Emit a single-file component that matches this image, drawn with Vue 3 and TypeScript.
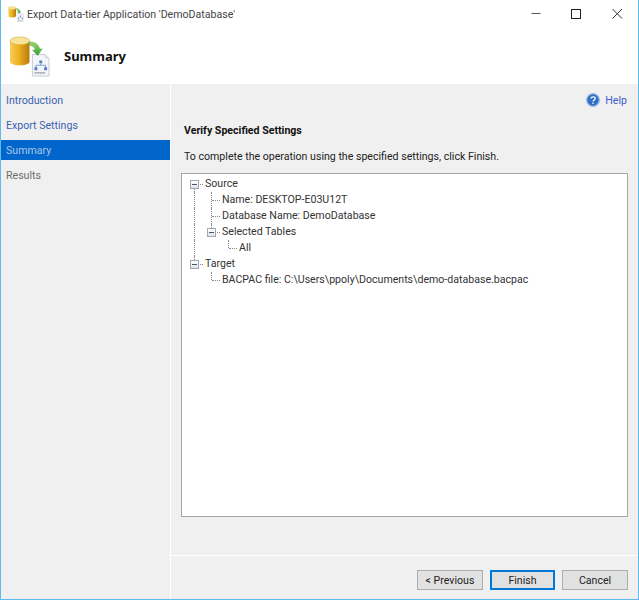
<script setup lang="ts">
type Cell = "" | "v" | "box" | "boxTop" | "corner" | "tee";

const steps = [
  { label: "Introduction", state: "link" },
  { label: "Export Settings", state: "link" },
  { label: "Summary", state: "active" },
  { label: "Results", state: "off" },
];

// one row per tree line, the cells draw the dotted connectors
const rows: { cells: Cell[]; text: string }[] = [
  { cells: ["box"], text: "Source" },
  { cells: ["v", "tee"], text: "Name: DESKTOP-E03U12T" },
  { cells: ["v", "tee"], text: "Database Name: DemoDatabase" },
  { cells: ["v", "boxTop"], text: "Selected Tables" },
  { cells: ["v", "", "corner"], text: "All" },
  { cells: ["boxTop"], text: "Target" },
  { cells: ["", "corner"], text: "BACPAC file: C:\\Users\\ppoly\\Documents\\demo-database.bacpac" },
];
</script>

<template>
  <div class="window">
    <svg width="0" height="0" class="defs">
      <defs>
        <linearGradient id="gold" x1="0" x2="1" y1="0" y2="0">
          <stop offset="0" stop-color="#f6cf5a" />
          <stop offset="0.45" stop-color="#eeb01f" />
          <stop offset="1" stop-color="#b97a10" />
        </linearGradient>
        <linearGradient id="green" x1="0" x2="0" y1="0" y2="1">
          <stop offset="0" stop-color="#9fdc6a" />
          <stop offset="1" stop-color="#2f9e35" />
        </linearGradient>
        <symbol id="wizard-icon" viewBox="0 0 42 42">
          <path d="M1 5v21c0 2.500 4.600 4 10 4s10-1.500 10-4V5z" fill="url(#gold)" />
          <ellipse cx="11" cy="5" rx="10" ry="4" fill="#f7e39a" stroke="#d9a52a" stroke-width=".6" />
          <path d="M24 19h13l4 4v18H24z" fill="#f4f5f8" stroke="#b9bdc6" stroke-width=".8" />
          <path d="M37 19v4h4z" fill="#d5d8df" />
          <path d="M31 25h3v3h-3zM26 32h3v3h-3zM36 32h3v3h-3z" fill="#4f7fc4" />
          <path d="M32.500 28v2M27.500 32v-2h10v2" fill="none" stroke="#4f7fc4" stroke-width=".7" />
          <path d="M26 37h11v1.600H26z" fill="#a9adb6" />
          <path d="M21 6c6 0 9.500 3 10.500 7.500l2.500-.5-4.500 7-5.500-5.500 3-.5C26 11 24 9.500 21 9.500z" fill="url(#green)" stroke="#3c9a3c" stroke-width=".4" />
        </symbol>
      </defs>
    </svg>

    <header class="titlebar">
      <svg class="title-icon" width="16" height="16"><use href="#wizard-icon" /></svg>
      <span class="title-text">Export Data-tier Application 'DemoDatabase'</span>
      <div class="caption-buttons">
        <svg width="46" height="28" viewBox="0 0 46 28"><path d="M21.500 13.500h9" stroke="#555" /></svg>
        <svg width="41" height="28" viewBox="0 0 41 28"><rect x="15.500" y="9.500" width="9" height="9" fill="none" stroke="#222" /></svg>
        <svg width="41" height="28" viewBox="0 0 41 28"><path d="M15.500 9l9.500 9.500M25 9l-9.500 9.500" stroke="#333" fill="none" /></svg>
      </div>
    </header>

    <div class="banner">
      <svg class="banner-icon" width="41" height="41"><use href="#wizard-icon" /></svg>
      <h1 class="banner-title">Summary</h1>
    </div>

    <div class="body">
      <nav class="steps">
        <div v-for="step in steps" :key="step.label" class="step" :class="step.state">{{ step.label }}</div>
      </nav>

      <main class="content">
        <div class="help-row">
          <svg width="14" height="14" viewBox="0 0 14 14">
            <circle cx="7" cy="7" r="6.300" fill="#2f6fc7" stroke="#9db8e0" stroke-width="1.200" />
            <path d="M5 5.500C5 3.400 9.200 3.400 9.200 5.600 9.200 7 7.100 7 7.100 8.400" fill="none" stroke="#fff" stroke-width="1.300" />
            <circle cx="7" cy="10.300" r=".8" fill="#fff" />
          </svg>
          <span class="help-link">Help</span>
        </div>

        <div class="page">
          <h2 class="page-title">Verify Specified Settings</h2>
          <p class="page-note">To complete the operation using the specified settings, click Finish.</p>

          <div class="tree">
            <div v-for="row in rows" :key="row.text" class="tree-row">
              <span v-for="(cell, i) in row.cells" :key="i" class="cell" :class="cell">
                <i v-if="cell === 'box' || cell === 'boxTop'" class="expander"></i>
              </span>
              <span class="node-text">{{ row.text }}</span>
            </div>
          </div>
        </div>

        <footer class="actions">
          <button class="btn">&lt; Previous</button>
          <button class="btn primary">Finish</button>
          <button class="btn">Cancel</button>
        </footer>
      </main>
    </div>
  </div>
</template>

<style>
html,
body {
  margin: 0;
  background: #fff;
}
</style>

<style scoped>
.window {
  width: 639px;
  height: 600px;
  box-sizing: border-box;
  border: 1px solid #5fbbee;
  border-top: 0;
  display: flex;
  flex-direction: column;
  font-family: Roboto, "Noto Sans", sans-serif;
  font-size: 10.6px;
  color: #1a1a1a;
  background: #fff;
  overflow: hidden;
}

.defs {
  position: absolute;
}

.titlebar {
  height: 28px;
  display: flex;
  align-items: center;
  padding-left: 7px;
}

.title-icon {
  flex: none;
}

.title-text {
  margin-left: 3px;
  color: #444;
}

.caption-buttons {
  margin-left: auto;
  display: flex;
}

.banner {
  height: 56px;
  display: flex;
  align-items: center;
  padding-left: 8px;
}

.banner-icon {
  flex: none;
}

.banner-title {
  margin: 0 0 0 14px;
  font-family: "Noto Sans", sans-serif;
  font-size: 13px;
  font-weight: 700;
  color: #111;
}

.body {
  flex: 1;
  display: flex;
  min-height: 0;
  background: #f0f0f0;
}

.steps {
  width: 169px;
  flex: none;
  padding-top: 6px;
  display: flex;
  flex-direction: column;
  gap: 5px;
  border-right: 1px solid #fff;
}

.step {
  height: 20px;
  line-height: 21px;
  padding-left: 5px;
}

.step.link {
  color: #3a62b0;
}

.step.active {
  background: #0066cc;
  color: #a9c6e8;
}

.step.off {
  color: #6d6d6d;
}

.content {
  flex: 1;
  min-width: 0;
  display: flex;
  flex-direction: column;
}

.help-row {
  height: 31px;
  padding-right: 11px;
  display: flex;
  align-items: center;
  justify-content: flex-end;
  gap: 5px;
}

.help-link {
  color: #3a5fcd;
  padding-top: 2px;
}

.page {
  flex: 1;
  min-height: 0;
  display: flex;
  flex-direction: column;
  padding: 8px 10px 0 10px;
  border-bottom: 1px solid #fff;
}

.page-title {
  margin: 0 0 0 3px;
  font-size: 10.6px;
  font-weight: 700;
  color: #111;
  line-height: 16px;
}

.page-note {
  margin: 10px 0 0 3px;
  line-height: 16px;
  color: #222;
}

.tree {
  margin-top: 8px;
  height: 344px;
  box-sizing: border-box;
  background: #fff;
  border: 1px solid #a6a6a6;
  padding: 2px 0 0 4px;
}

.tree-row {
  height: 16px;
  display: flex;
  align-items: center;
  white-space: nowrap;
  line-height: 16px;
  color: #333;
}

.cell {
  position: relative;
  flex: none;
  width: 17px;
  height: 16px;
}

.cell.v::before,
.cell.tee::before,
.cell.corner::before,
.cell.box::before,
.cell.boxTop::before {
  content: "";
  position: absolute;
  left: 8px;
  top: 0;
  bottom: 0;
  border-left: 1px dotted #8a8a8a;
}

.cell.corner::before {
  bottom: 8px;
}

.cell.box::before {
  top: 8px;
}

.cell.boxTop::before {
  bottom: 8px;
}

.cell.tee::after,
.cell.corner::after,
.cell.box::after,
.cell.boxTop::after {
  content: "";
  position: absolute;
  left: 9px;
  right: 0;
  top: 8px;
  border-top: 1px dotted #8a8a8a;
}

.expander {
  position: absolute;
  z-index: 1;
  left: 4px;
  top: 4px;
  width: 9px;
  height: 9px;
  box-sizing: border-box;
  border: 1px solid #a0a8b4;
  background: linear-gradient(#fff, #dfe3ea);
}

.expander::after {
  content: "";
  position: absolute;
  left: 1px;
  right: 1px;
  top: 3px;
  border-top: 1px solid #4a5260;
}

.node-text {
  margin-left: 2px;
}

.actions {
  height: 43px;
  flex: none;
  box-sizing: border-box;
  padding: 14px 10px 0 0;
  display: flex;
  justify-content: flex-end;
  gap: 7px;
  align-items: flex-start;
}

.btn {
  width: 66px;
  height: 20px;
  padding: 1px 0 0;
  box-sizing: border-box;
  background: #e1e1e1;
  border: 1px solid #adadad;
  font: inherit;
  line-height: 16px;
  color: #222;
}

.btn.primary {
  width: 65px;
  border: 2px solid #0078d7;
}
</style>
